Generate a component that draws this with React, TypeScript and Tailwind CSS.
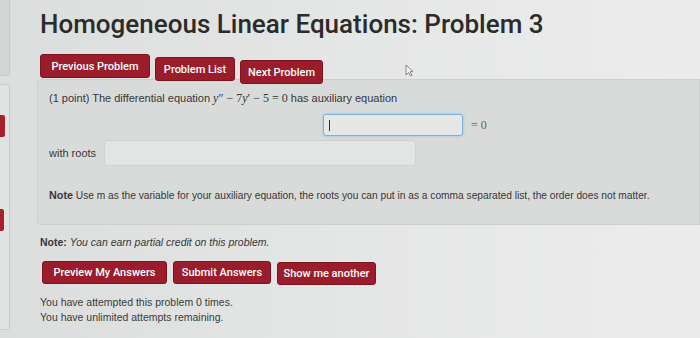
import React from "react";

const sans = { fontFamily: '"Liberation Sans", Arial, sans-serif' };
const btnFont = { fontFamily: 'Roboto, "Liberation Sans", sans-serif' };

function Btn({ children, className = "" }: { children: React.ReactNode; className?: string }) {
  return (
    <div
      className={
        "flex items-center justify-center rounded-[3px] bg-[#9b1c2a] text-white text-[11px] leading-none font-medium border border-[#7e1420] " +
        className
      }
      style={btnFont}
    >
      {children}
    </div>
  );
}

export default function App() {
  return (
    <div
      className="relative w-[700px] h-[338px] overflow-hidden flex bg-gradient-to-r from-[#dcdedd] via-[#e5e7e6] to-[#ececec] text-[#363636]"
      style={sans}
    >
      {/* left sidebar edge */}
      <div className="w-[10px] flex flex-col shrink-0">
        <div className="h-[76px] bg-[#d3d5d4] rounded-br-[4px] border-r border-b border-[#c9cbca]" />
        <div className="mt-[8px] flex-1 mb-[8px] bg-[#e1e3e2] border-r border-y border-[#cbcdcc] rounded-r-[4px] flex flex-col">
          <div className="mt-[30px] h-[22px] w-[5px] bg-[#a8202c] rounded-r-[2px]" />
          <div className="mt-[72px] h-[22px] w-[4px] bg-[#a8202c] rounded-r-[2px]" />
        </div>
      </div>

      {/* main */}
      <div className="flex-1 flex flex-col pl-[27px]">
        <h1
          className="mt-[8px] ml-[3px] text-[26px] leading-[32px] font-medium text-[#2b2b2b] whitespace-nowrap"
          style={{ fontFamily: 'Roboto, "Liberation Sans", sans-serif' }}
        >
          Homogeneous Linear Equations: Problem 3
        </h1>

        <div className="relative z-10 mt-[14px] ml-[3px] flex items-start gap-[5px]">
          <Btn className="w-[110px] h-[24px]">Previous Problem</Btn>
          <Btn className="w-[80px] h-[24px] mt-[3px]">Problem List</Btn>
          <Btn className="w-[83px] h-[24px] mt-[6px]">Next Problem</Btn>
        </div>

        <div className="-mt-[5px] h-[146px] bg-[#d9dbda] border border-[#cdcfce] rounded-l-[4px] flex flex-col pl-[11px]">
          <div className="mt-[11px] text-[11px] leading-[14px] whitespace-nowrap">
            (1 point) The differential equation{" "}
            <span className="text-[12px]" style={{ fontFamily: '"Liberation Serif", serif' }}>
              <i>y</i>″ − 7<i>y</i>′ − 5 = 0
            </span>{" "}
            has auxiliary equation
          </div>
          <div className="mt-[9px] flex items-center pl-[274px]">
            <div className="w-[140px] h-[22px] bg-[#e6e8e7] border border-[#7fb2db] rounded-[3px] shadow-[0_0_3px_#8ebde3] flex items-center pl-[5px]">
              <div className="w-[1px] h-[11px] bg-[#333]" />
            </div>
            <span className="ml-[8px] text-[12px] text-[#666]" style={{ fontFamily: '"Liberation Serif", serif' }}>
              = 0
            </span>
          </div>
          <div className="mt-[4px] flex items-center">
            <span className="text-[11px] w-[55px]">with roots</span>
            <div className="w-[312px] h-[26px] bg-[#e3e5e4] border border-[#cfd1d0] rounded-[3px]" />
          </div>
          <div className="mt-[23px] text-[10.2px] leading-[13px] whitespace-nowrap">
            <b className="text-[10.8px]">Note</b> Use m as the variable for your auxiliary equation, the roots you can put
            in as a comma separated list, the order does not matter.
          </div>
        </div>

        <div className="mt-[10px] ml-[3px] text-[10.5px] leading-[14px] whitespace-nowrap">
          <b>Note:</b> <i>You can earn partial credit on this problem.</i>
        </div>

        <div className="mt-[12px] ml-[5px] flex items-start gap-[6px]">
          <Btn className="w-[125px] h-[23px] text-[11.5px]">Preview My Answers</Btn>
          <Btn className="w-[98px] h-[23px] text-[11.5px]">Submit Answers</Btn>
          <Btn className="w-[99px] h-[23px] mt-[1px] text-[11.5px]">Show me another</Btn>
        </div>

        <div className="mt-[10px] ml-[3px] text-[10.5px] leading-[15px] text-[#3a3a3a]">
          <div>You have attempted this problem 0 times.</div>
          <div>You have unlimited attempts remaining.</div>
        </div>
      </div>

      {/* mouse pointer overlay */}
      <svg className="absolute left-[405px] top-[64px]" width="9" height="13" viewBox="0 0 9 13">
        <path d="M1 1 L1 11 L3.5 8.5 L5.5 12 L7 11.2 L5 7.8 L8 7.6 Z" fill="#f4f4f4" stroke="#6a6a6a" strokeWidth="0.8" />
      </svg>
    </div>
  );
}
